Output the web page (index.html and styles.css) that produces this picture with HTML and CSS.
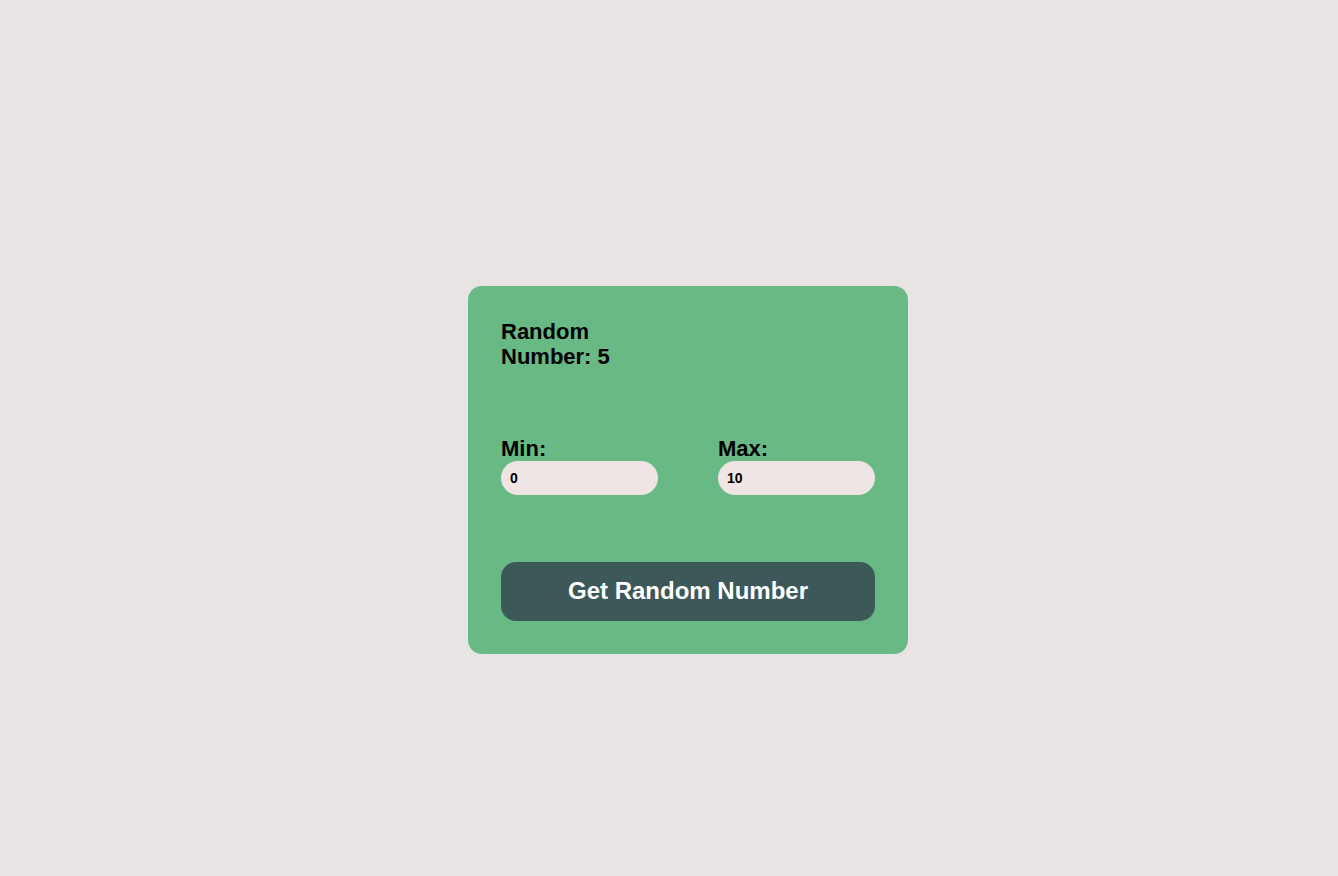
FILE: index.html
```html
<!DOCTYPE html>
<html>
<head>
<meta charset="utf-8">
<link rel="stylesheet" href="styles.css">
</head>
<body>
<div class="page">
  <div class="card">
    <div class="top">
      <h2 class="result">Random Number: 5</h2>
    </div>
    <div class="fields">
      <label class="field">
        <span class="label">Min:</span>
        <input class="input" type="text" value="0">
      </label>
      <label class="field">
        <span class="label">Max:</span>
        <input class="input" type="text" value="10">
      </label>
    </div>
    <button class="btn">Get Random Number</button>
  </div>
</div>
</body>
</html>
```
FILE: styles.css
```css
html, body {
  margin: 0;
  padding: 0;
}
body {
  background: #e8e4e3;
  font-family: "Liberation Sans", Arial, sans-serif;
}
.page {
  height: 876px;
  display: flex;
  align-items: center;
  justify-content: center;
}
.card {
  width: 374px;
  padding: 33px;
  background: #69b985;
  border-radius: 14px;
  display: flex;
  flex-direction: column;
  gap: 67px;
  margin-left: 38px;
  margin-top: 63px;
}
.top {
  display: grid;
  grid-template-columns: 157px 1fr;
}
.result {
  margin: 0;
  font-size: 22px;
  line-height: 25px;
  font-weight: bold;
  color: #000;
}
.fields {
  display: grid;
  grid-template-columns: 157px 157px;
  column-gap: 60px;
}
.field {
  display: flex;
  flex-direction: column;
}
.label {
  font-size: 22px;
  font-weight: bold;
  line-height: 25px;
  color: #000;
}
.input {
  box-sizing: border-box;
  width: 157px;
  height: 34px;
  border: none;
  outline: none;
  border-radius: 17px;
  background: #f0e5e5;
  padding: 0 9px;
  font-family: "Liberation Sans", Arial, sans-serif;
  font-size: 14px;
  font-weight: bold;
  color: #000;
}
.btn {
  height: 59px;
  border: none;
  border-radius: 15px;
  background: #3d5859;
  color: #fff;
  font-family: "Liberation Sans", Arial, sans-serif;
  font-size: 24px;
  font-weight: bold;
  cursor: pointer;
}
```
